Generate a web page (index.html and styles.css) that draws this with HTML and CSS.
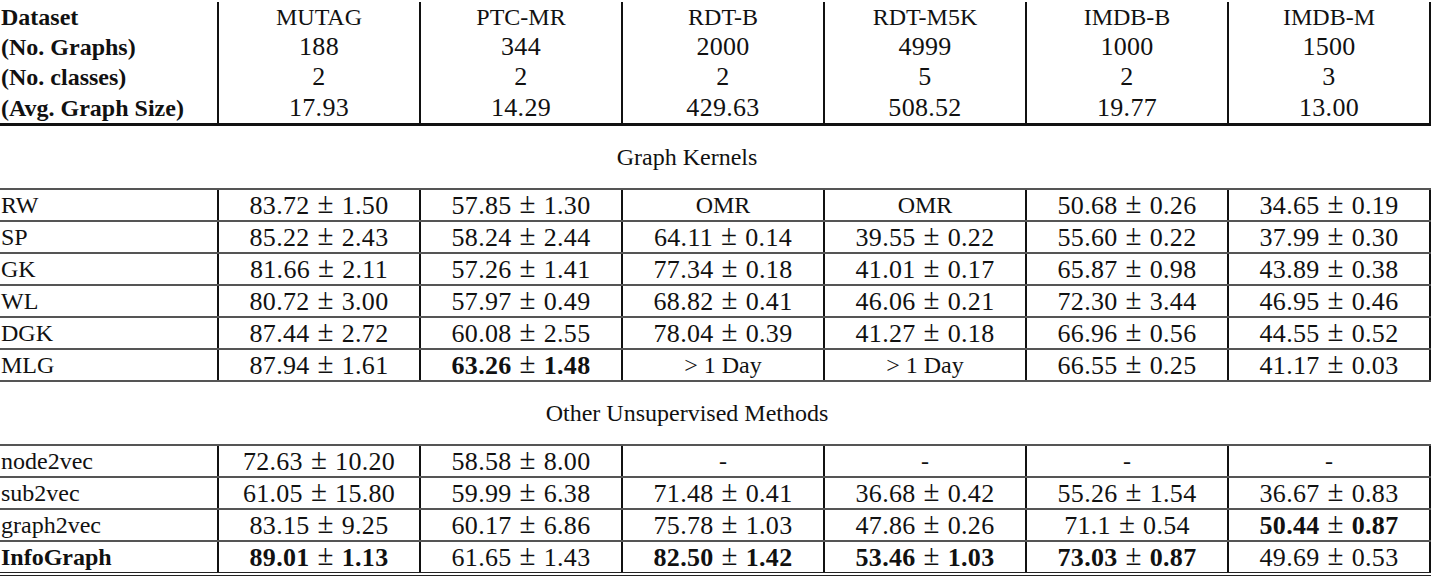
FILE: index.html
```html
<!DOCTYPE html>
<html>
<head>
<link rel="stylesheet" href="styles.css">
</head>
<body>

<table class="results">
  <colgroup>
    <col class="col-name">
    <col class="col-data">
    <col class="col-data">
    <col class="col-data">
    <col class="col-data">
    <col class="col-data">
    <col class="col-data">
  </colgroup>
  <tbody>
    <tr class="head-row head-first">
      <td class="name bold">Dataset</td>
      <td>MUTAG</td><td>PTC-MR</td><td>RDT-B</td><td>RDT-M5K</td><td>IMDB-B</td><td class="last">IMDB-M</td>
    </tr>
    <tr class="head-row">
      <td class="name bold">(No. Graphs)</td>
      <td class="num">188</td><td class="num">344</td><td class="num">2000</td><td class="num">4999</td><td class="num">1000</td><td class="num last">1500</td>
    </tr>
    <tr class="head-row">
      <td class="name bold">(No. classes)</td>
      <td class="num">2</td><td class="num">2</td><td class="num">2</td><td class="num">5</td><td class="num">2</td><td class="num last">3</td>
    </tr>
    <tr class="head-row head-last">
      <td class="name bold">(Avg. Graph Size)</td>
      <td class="num">17.93</td><td class="num">14.29</td><td class="num">429.63</td><td class="num">508.52</td><td class="num">19.77</td><td class="num last">13.00</td>
    </tr>

    <tr class="section">
      <td colspan="7">Graph Kernels</td>
    </tr>
    <tr class="data">
      <td class="name">RW</td>
      <td class="num">83.72<span class="pm">±</span>1.50</td>
      <td class="num">57.85<span class="pm">±</span>1.30</td>
      <td>OMR</td>
      <td>OMR</td>
      <td class="num">50.68<span class="pm">±</span>0.26</td>
      <td class="num last">34.65<span class="pm">±</span>0.19</td>
    </tr>
    <tr class="data">
      <td class="name">SP</td>
      <td class="num">85.22<span class="pm">±</span>2.43</td>
      <td class="num">58.24<span class="pm">±</span>2.44</td>
      <td class="num">64.11<span class="pm">±</span>0.14</td>
      <td class="num">39.55<span class="pm">±</span>0.22</td>
      <td class="num">55.60<span class="pm">±</span>0.22</td>
      <td class="num last">37.99<span class="pm">±</span>0.30</td>
    </tr>
    <tr class="data">
      <td class="name">GK</td>
      <td class="num">81.66<span class="pm">±</span>2.11</td>
      <td class="num">57.26<span class="pm">±</span>1.41</td>
      <td class="num">77.34<span class="pm">±</span>0.18</td>
      <td class="num">41.01<span class="pm">±</span>0.17</td>
      <td class="num">65.87<span class="pm">±</span>0.98</td>
      <td class="num last">43.89<span class="pm">±</span>0.38</td>
    </tr>
    <tr class="data">
      <td class="name">WL</td>
      <td class="num">80.72<span class="pm">±</span>3.00</td>
      <td class="num">57.97<span class="pm">±</span>0.49</td>
      <td class="num">68.82<span class="pm">±</span>0.41</td>
      <td class="num">46.06<span class="pm">±</span>0.21</td>
      <td class="num">72.30<span class="pm">±</span>3.44</td>
      <td class="num last">46.95<span class="pm">±</span>0.46</td>
    </tr>
    <tr class="data">
      <td class="name">DGK</td>
      <td class="num">87.44<span class="pm">±</span>2.72</td>
      <td class="num">60.08<span class="pm">±</span>2.55</td>
      <td class="num">78.04<span class="pm">±</span>0.39</td>
      <td class="num">41.27<span class="pm">±</span>0.18</td>
      <td class="num">66.96<span class="pm">±</span>0.56</td>
      <td class="num last">44.55<span class="pm">±</span>0.52</td>
    </tr>
    <tr class="data">
      <td class="name">MLG</td>
      <td class="num">87.94<span class="pm">±</span>1.61</td>
      <td class="num bold">63.26<span class="pm">±</span>1.48</td>
      <td>&gt; 1 Day</td>
      <td>&gt; 1 Day</td>
      <td class="num">66.55<span class="pm">±</span>0.25</td>
      <td class="num last">41.17<span class="pm">±</span>0.03</td>
    </tr>

    <tr class="section">
      <td colspan="7">Other Unsupervised Methods</td>
    </tr>
    <tr class="data">
      <td class="name">node2vec</td>
      <td class="num">72.63<span class="pm">±</span>10.20</td>
      <td class="num">58.58<span class="pm">±</span>8.00</td>
      <td>-</td>
      <td>-</td>
      <td>-</td>
      <td class="last">-</td>
    </tr>
    <tr class="data">
      <td class="name">sub2vec</td>
      <td class="num">61.05<span class="pm">±</span>15.80</td>
      <td class="num">59.99<span class="pm">±</span>6.38</td>
      <td class="num">71.48<span class="pm">±</span>0.41</td>
      <td class="num">36.68<span class="pm">±</span>0.42</td>
      <td class="num">55.26<span class="pm">±</span>1.54</td>
      <td class="num last">36.67<span class="pm">±</span>0.83</td>
    </tr>
    <tr class="data">
      <td class="name">graph2vec</td>
      <td class="num">83.15<span class="pm">±</span>9.25</td>
      <td class="num">60.17<span class="pm">±</span>6.86</td>
      <td class="num">75.78<span class="pm">±</span>1.03</td>
      <td class="num">47.86<span class="pm">±</span>0.26</td>
      <td class="num">71.1<span class="pm">±</span>0.54</td>
      <td class="num bold last">50.44<span class="pm">±</span>0.87</td>
    </tr>
    <tr class="data data-last">
      <td class="name bold">InfoGraph</td>
      <td class="num bold">89.01<span class="pm">±</span>1.13</td>
      <td class="num">61.65<span class="pm">±</span>1.43</td>
      <td class="num bold">82.50<span class="pm">±</span>1.42</td>
      <td class="num bold">53.46<span class="pm">±</span>1.03</td>
      <td class="num bold">73.03<span class="pm">±</span>0.87</td>
      <td class="num last">49.69<span class="pm">±</span>0.53</td>
    </tr>
  </tbody>
</table>

</body>
</html>
```

FILE: styles.css
```css
body {
  background-color: white;
  color: #111;
  font-family: "Liberation Serif", "Times New Roman", serif;
  margin: 0;
}

.results {
  border-collapse: collapse;
  margin-top: 2px;
  table-layout: fixed;
  width: 1430px;
}

.col-name {
  width: 218px;
}

.col-data {
  width: 202px;
}

td {
  font-size: 24px;
  line-height: 24px;
  padding: 0px;
  text-align: center;
  vertical-align: middle;
  white-space: nowrap;
}

td.name {
  padding-left: 1px;
  text-align: left;
}

td.num {
  font-size: 26px;
  letter-spacing: 0.3px;
}

.bold {
  font-weight: bold;
}

.pm {
  font-size: 29px;
  font-weight: normal;
  line-height: 20px;
  margin: 0 8px;
  vertical-align: 1px;
}

.last {
  border-right: 2px solid #111;
}

/* header block */
.head-row td {
  height: 30px;
}

.head-row td + td {
  border-left: 2px solid #111;
}

.head-last td {
  border-bottom: 3px solid #111;
  height: 31px;
}

/* section captions */
.section td {
  border-bottom: 2px solid #555;
  height: 62px;
  padding-right: 56px;
}

/* result rows */
.data td {
  border-bottom: 2px solid #555;
  height: 30px;
}

.data td + td {
  border-left: 2px solid #111;
}

.data-last td {
  border-bottom: 4px double #222;
}
```
